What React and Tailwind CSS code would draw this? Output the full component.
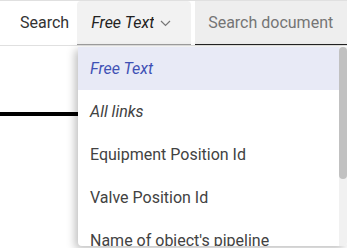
import React from "react";

const options = [
  { label: "Free Text", italic: true, active: true },
  { label: "All links", italic: true },
  { label: "Equipment Position Id" },
  { label: "Valve Position Id" },
  { label: "Name of object's pipeline" },
];

export default function App() {
  return (
    <div className="relative w-[347px] h-[248px] overflow-hidden bg-white font-['Roboto',sans-serif] text-[16px]">
      {/* search bar */}
      <div className="flex h-[46px] border-t border-b border-[#e0e0e0]">
        <div className="flex items-center pl-5 pr-2 text-[#333]">Search</div>
        <div className="flex w-[114px] items-center rounded-t bg-[#f2f2f2] pl-[14px] pr-2 border-b border-[#9e9e9e]">
          <span className="w-[63px] overflow-hidden whitespace-nowrap italic text-[#222]">Free Text</span>
          <svg width="11" height="7" viewBox="0 0 11 7" className="ml-[6px] mt-[2px]">
            <path d="M1 1l4.5 4.5L10 1" fill="none" stroke="#777" strokeWidth="1.2" />
          </svg>
        </div>
        <div className="ml-1 flex flex-1 items-center bg-[#eeeeee] pl-[13px] border-b border-[#222] text-[#757575] whitespace-nowrap">
          Search document
        </div>
      </div>

      {/* page content behind the menu */}
      <div className="mt-[66px] h-[4px] w-[80px] bg-black" />

      {/* dropdown menu */}
      <div className="absolute left-[78px] top-[47px] right-0 h-[199px] flex rounded-b bg-white shadow-[-3px_3px_8px_rgba(0,0,0,0.25)] overflow-hidden">
        <div className="flex-1">
          {options.map((o) => (
            <div
              key={o.label}
              className={`flex h-[43px] items-center pl-3 whitespace-nowrap ${
                o.active ? "bg-[#e8eaf6] text-[#3f51b5]" : "text-[#424242]"
              } ${o.italic ? "italic" : ""}`}
            >
              {o.label}
            </div>
          ))}
        </div>
        <div className="w-[8px] bg-[#f1f1f1]">
          <div className="h-[132px] rounded-full bg-[#c1c1c1]" />
        </div>
      </div>
    </div>
  );
}
